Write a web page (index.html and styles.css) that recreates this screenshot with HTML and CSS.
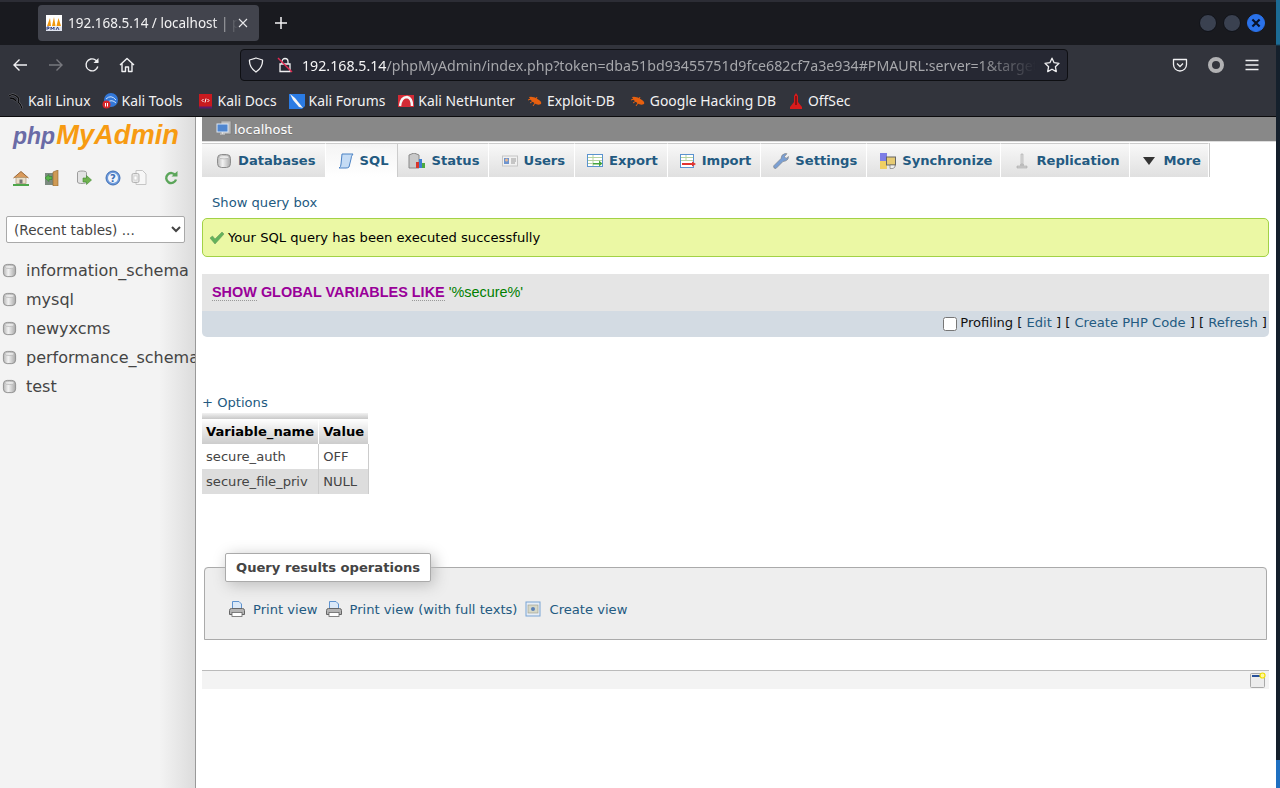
FILE: index.html
```html
<!DOCTYPE html>
<html lang="en">
<head>
<meta charset="utf-8">
<title>192.168.5.14 / localhost | phpMyAdmin</title>
<link rel="stylesheet" href="styles.css">
</head>
<body>
<svg class="defs" width="0" height="0" aria-hidden="true">
  <defs>
    <linearGradient id="cyl" x1="0" x2="1" y1="0" y2="0"><stop offset="0" stop-color="#b5b5b5"/><stop offset=".4" stop-color="#f2f2f2"/><stop offset="1" stop-color="#a8a8a8"/></linearGradient>
    <symbol id="db" viewBox="0 0 16 16">
      <rect x="1.500" y="1.500" width="13" height="13" rx="4" fill="url(#cyl)" stroke="#8d8d8d"/>
      <ellipse cx="8" cy="4.200" rx="5" ry="1.700" fill="#e9e9e9" stroke="#a5a5a5" stroke-width=".6"/>
    </symbol>
    <symbol id="printer" viewBox="0 0 16 16">
      <path d="M3.500 .5H10L12.500 3V9H3.500Z" fill="#dbe9f8" stroke="#5f93cf"/>
      <path d="M.5 9.500Q.5 7.500 2.500 7.500H13.500Q15.500 7.500 15.500 9.500V13.500H.5Z" fill="#b4b4b4" stroke="#666"/>
      <rect x="3" y="11.500" width="10" height="4" fill="#fff" stroke="#666" stroke-width=".8"/>
    </symbol>
  </defs>
</svg>
<div class="window">
  <header class="chrome">
    <div class="tabbar">
      <div class="tab">
        <svg class="ico16" viewBox="0 0 16 16"><rect width="16" height="16" fill="#fff"/><path d="M1 11L4 3L5 11ZM6 11L8 2L9.500 11ZM10.500 11L12.500 3L15 11Z" fill="#f0970f"/><rect x="0" y="11.500" width="16" height="4.500" fill="#dfe3ee"/><path d="M1 15V12H3V13.500H1.500M5 15V12L6.500 14L8 12V15M10 15L11.500 12L13 15" fill="none" stroke="#26367c" stroke-width=".9"/></svg>
        <span class="tab-title">192.168.5.14 / localhost | phpMyAdmin</span>
        <svg class="tab-x" viewBox="0 0 10 10"><path d="M1 1L9 9M9 1L1 9" stroke="#e8e8ea" stroke-width="1.100"/></svg>
      </div>
      <svg class="plus" viewBox="0 0 14 14"><path d="M7 1V13M1 7H13" stroke="#f4f4f5" stroke-width="1.500"/></svg>
      <div class="winctl">
        <span class="wc"></span><span class="wc"></span>
        <span class="wc wc-close"><svg viewBox="0 0 10 10"><path d="M2 2L8 8M8 2L2 8" stroke="#08122a" stroke-width="1.800"/></svg></span>
      </div>
    </div>
    <nav class="navbar">
      <svg class="nav-ico back" viewBox="0 0 16 16"><path d="M15 8H2M7.500 2.500L2 8L7.500 13.500" fill="none" stroke="#f0f0f2" stroke-width="1.400"/></svg>
      <svg class="nav-ico fwd" viewBox="0 0 16 16"><path d="M1 8H14M8.500 2.500L14 8L8.500 13.500" fill="none" stroke="#77787e" stroke-width="1.400"/></svg>
      <svg class="nav-ico reload" viewBox="0 0 16 16"><path d="M13.800 9.500A6 6 0 1 1 11.500 3L14 5" fill="none" stroke="#f0f0f2" stroke-width="1.400"/><path d="M14.500 1V6H9.500" fill="#f0f0f2"/></svg>
      <svg class="nav-ico home" viewBox="0 0 16 16"><path d="M1 8L8 1.500L15 8M3 6.500V14.500H6.500V10H9.500V14.500H13V6.500" fill="none" stroke="#f0f0f2" stroke-width="1.400" stroke-linejoin="round"/></svg>
      <div class="urlbar">
        <svg class="nav-ico shield" viewBox="0 0 16 16"><path d="M8 1L14.500 3Q15 10 8 15Q1 10 1.500 3Z" fill="none" stroke="#f0f0f2" stroke-width="1.300" stroke-linejoin="round"/></svg>
        <svg class="nav-ico lock" viewBox="0 0 16 16"><path d="M5 7V4.500A3 3 0 0 1 11 4.500V7M3 7H13V14.500H3Z" fill="none" stroke="#f0f0f2" stroke-width="1.300"/><path d="M1 1L15 15" stroke="#e22850" stroke-width="1.400"/></svg>
        <span class="url"><span class="url-host">192.168.5.14</span>/phpMyAdmin/index.php?token=dba51bd93455751d9fce682cf7a3e934#PMAURL:server=1&amp;target=&amp;db=</span>
        <svg class="nav-ico star" viewBox="0 0 16 16"><path d="M8 1.200L10.100 5.700L15 6.300L11.400 9.700L12.300 14.600L8 12.200L3.700 14.600L4.600 9.700L1 6.300L5.900 5.700Z" fill="none" stroke="#f0f0f2" stroke-width="1.300" stroke-linejoin="round"/></svg>
      </div>
      <svg class="nav-ico pocket" viewBox="0 0 16 16"><path d="M1.500 2.500H14.500V7.500A6.500 6.500 0 0 1 1.500 7.500Z" fill="none" stroke="#f0f0f2" stroke-width="1.300" stroke-linejoin="round"/><path d="M5 6.500L8 9.500L11 6.500" fill="none" stroke="#f0f0f2" stroke-width="1.300"/></svg>
      <svg class="nav-ico ring" viewBox="0 0 16 16"><circle cx="8" cy="8" r="6" fill="none" stroke="#b1b1b3" stroke-width="4"/></svg>
      <svg class="nav-ico menu" viewBox="0 0 16 16"><path d="M1.500 3.500H14.500M1.500 8H14.500M1.500 12.500H14.500" stroke="#f0f0f2" stroke-width="1.300"/></svg>
    </nav>
    <div class="bookmarks">
      <a class="bm"><svg class="ico16" viewBox="0 0 16 16"><path d="M1 3Q5 0 9 3.500Q12 6 10 9Q13 11 14 15.500M2 5Q6 5 8 8" fill="none" stroke="#77787e" stroke-width="2"/><path d="M1 3Q5 0 9 3.500Q12 6 10 9Q13 11 14 15.500M2 5Q6 5 8 8" fill="none" stroke="#08080a" stroke-width="1.300"/></svg><span>Kali Linux</span></a>
      <a class="bm bm-tools"><svg class="ico16" viewBox="0 0 16 16"><circle cx="9" cy="7" r="7" fill="#3277d8"/><path d="M4 6Q9 1 14 7M6 9Q10 6 14 10" fill="none" stroke="#cfe1f8"/><circle cx="4.500" cy="11.500" r="4" fill="#d9262b"/><path d="M3.500 10V13.500M5.500 10V13.500" stroke="#fff"/></svg><span>Kali Tools</span></a>
      <a class="bm bm-docs"><svg class="ico16" viewBox="0 0 16 16"><rect x="1" y="1" width="13" height="14" fill="#c81a1f"/><rect x="1" y="13.500" width="13" height="2" fill="#5b1a6b"/><path d="M5.500 6L4 7.500L5.500 9M9.500 6L11 7.500L9.500 9M8 5.500L7 9.500" fill="none" stroke="#fff"/></svg><span>Kali Docs</span></a>
      <a class="bm"><svg class="ico16" viewBox="0 0 16 16"><path d="M0 1H16V13L13 16H0Z" fill="#2a7be4"/><path d="M1 1L6 5L14 15L10 14L4 7Z" fill="#f4f4f4"/></svg><span>Kali Forums</span></a>
      <a class="bm bm-net"><svg class="ico16" viewBox="0 0 16 16"><rect y="2" width="16" height="12" fill="#d42a35"/><path d="M2 13Q3 4 9 4Q14 5 14 13" fill="none" stroke="#f5f5f5" stroke-width="2.500"/></svg><span>Kali NetHunter</span></a>
      <a class="bm"><svg class="ico16" viewBox="0 0 16 16"><path d="M2 4Q7 3 12 7Q15 9 14 11Q10 13 6 9Q3 7 2 4Z" fill="#e8600f"/><path d="M3 10L6 8M6 13L8 10M10 4L9 6M1 7L4 6" stroke="#e8600f"/></svg><span>Exploit-DB</span></a>
      <a class="bm bm-ghdb"><svg class="ico16" viewBox="0 0 16 16"><path d="M2 4Q7 3 12 7Q15 9 14 11Q10 13 6 9Q3 7 2 4Z" fill="#e8600f"/><path d="M3 10L6 8M6 13L8 10M10 4L9 6M1 7L4 6" stroke="#e8600f"/></svg><span>Google Hacking DB</span></a>
      <a class="bm"><svg class="ico16" viewBox="0 0 16 16"><path d="M8 0L10 3V9L14 14V16H2V14L6 9V3Z" fill="#d91c1c"/><path d="M8 3V12" stroke="#5c0a0a" stroke-width="1.200"/></svg><span>OffSec</span></a>
    </div>
  </header>

  <div class="app">
    <aside class="sidebar">
      <div class="logo"><span class="logo-php">php</span><span class="logo-my">MyAdmin</span></div>
      <div class="side-icons">
        <svg class="ico16 si-home" viewBox="0 0 16 16"><path d="M0.500 8L8 1.500L15.500 8" fill="#d99a5b" stroke="#9a6a3a"/><rect x="3" y="7.500" width="10" height="6" fill="#eadfc9" stroke="#a08a68" stroke-width=".6"/><rect x="6.500" y="9.500" width="3" height="4" fill="#777"/><path d="M0 15H16" stroke="#4ea64a" stroke-width="2"/></svg>
        <svg class="ico16 si-exit" viewBox="0 0 16 16"><rect x="1" y="3" width="9" height="12" fill="#7c8a80"/><path d="M9 2L14 0V16H9Z" fill="#cf9a55" stroke="#8f6530" stroke-width=".6"/><path d="M1 8L5 4.500V6.500H8V9.500H5V11.500Z" fill="#59b54a" stroke="#2c7a2c" stroke-width=".5"/></svg>
        <svg class="ico16 si-sql" viewBox="0 0 16 16"><path d="M1.500 2.500C1.500 .5 10.500 .5 10.500 2.500V12C10.500 14 1.500 14 1.500 12Z" fill="#e3e3e3" stroke="#9c9c9c"/><path d="M7 8H10.500V5.500L15.500 10L10.500 14.500V12H7Z" fill="#6fb24f" stroke="#3f8a30" stroke-width=".6"/></svg>
        <svg class="ico16 si-help" viewBox="0 0 16 16"><circle cx="8" cy="8" r="7" fill="#6f9bdc" stroke="#3e6fb5"/><circle cx="8" cy="8" r="5" fill="#f1f5fb"/><text class="help-q" x="8" y="11.500" text-anchor="middle">?</text></svg>
        <svg class="ico16 si-docs" viewBox="0 0 16 16"><path d="M5 .5H11.500L15 4V14.500H5Z" fill="#f7f7f7" stroke="#c6c6c6"/><rect x="1" y="3.500" width="7" height="9" rx="1.500" fill="#e7e7e7" stroke="#b3b3b3"/><rect x="3" y="6" width="3" height="4" fill="#fff" stroke="#bbb" stroke-width=".5"/></svg>
        <svg class="ico16 si-reload" viewBox="0 0 16 16"><path d="M12.500 5.500A5 5 0 1 0 13 9.500" fill="none" stroke="#5ba55a" stroke-width="2.400"/><path d="M8.500 6.500H14.500V1Z" fill="#5ba55a"/></svg>
      </div>
      <select class="recent"><option>(Recent tables) ...</option></select>
      <ul class="dblist">
        <li><svg class="ico15"><use href="#db"/></svg><span>information_schema</span></li>
        <li><svg class="ico15"><use href="#db"/></svg><span>mysql</span></li>
        <li><svg class="ico15"><use href="#db"/></svg><span>newyxcms</span></li>
        <li><svg class="ico15"><use href="#db"/></svg><span>performance_schema</span></li>
        <li><svg class="ico15"><use href="#db"/></svg><span>test</span></li>
      </ul>
    </aside>

    <main class="main">
      <div class="serverbar"><svg class="ico16" viewBox="0 0 16 16"><rect x="5" y="0" width="10" height="13" fill="#b9b9b9" stroke="#777" stroke-width=".6"/><rect x="1" y="3" width="11" height="8" fill="#4f86d0" stroke="#dbe6f4"/><path d="M4 13H9M6.500 11V13" stroke="#dfdfdf"/></svg><span>localhost</span></div>
      <div class="tabs">
        <a class="pt pt-db"><svg class="ico16"><use href="#db"/></svg>Databases</a>
        <a class="pt pt-active"><svg class="ico16" viewBox="0 0 16 16"><path d="M4 1H15Q13 3 13 6L11 14Q10 15 8 15H1Q3 14 3 11Z" fill="#c5dcf5" stroke="#4b82c4"/></svg>SQL</a>
        <a class="pt pt-status"><svg class="ico18" viewBox="0 0 18 16"><path d="M1 2L6 0L11 2V15H1Z" fill="#c9c9c9" stroke="#888"/><rect x="8" y="9" width="3" height="6" fill="#d9362b"/><rect x="11" y="6" width="3" height="9" fill="#3f7fd1"/><rect x="14" y="10" width="3" height="5" fill="#4caa3f"/></svg>Status</a>
        <a class="pt pt-wide"><svg class="ico16" viewBox="0 0 16 16"><rect x=".5" y="3" width="15" height="10" fill="#f1f1f1" stroke="#c5c5c5"/><rect x="2" y="5" width="5" height="6" fill="#6d94cf"/><circle cx="4.500" cy="7" r="1.500" fill="#eab98f"/><path d="M9 6H14M9 8H14M9 10H13" stroke="#999"/></svg>Users</a>
        <a class="pt pt-mid"><svg class="ico16" viewBox="0 0 16 16"><rect x=".5" y="1.500" width="15" height="12" fill="#fff" stroke="#5a93cf"/><path d="M1 4.500H15M1 7.500H15M1 10.500H15M6 2V13" stroke="#b5d3a0"/><path d="M6 10H12V7.500L15.500 10.500L12 13.500V11.500H6Z" fill="#46a53e"/></svg>Export</a>
        <a class="pt pt-mid"><svg class="ico16" viewBox="0 0 16 16"><rect x=".5" y="1.500" width="13" height="13" fill="#fff" stroke="#5a93cf"/><path d="M1 4.500H13M1 7.500H13M6 2V7" stroke="#b5d3a0"/><path d="M2 10H12V8.500L16 11L12 13.500V12H2Z" fill="#e2342f"/></svg>Import</a>
        <a class="pt pt-mid"><svg class="ico16" viewBox="0 0 16 16"><path d="M.5 13L8 5.500Q8 1.500 12 .5L14 .7L11.500 3.500L13 5.500L15.500 3.500Q15.500 8 10 8.500L3 15.500Q.5 16 .5 13Z" fill="#7a9fd3" stroke="#7f7f7f" stroke-width=".6"/></svg>Settings</a>
        <a class="pt pt-sync"><svg class="ico16" viewBox="0 0 16 16"><rect x="0" y="0" width="7" height="8" fill="#7e7ee6"/><rect x="0" y="8" width="7" height="8" fill="#efcf62"/><rect x="6.500" y="4" width="9" height="8" fill="#e6cb74" stroke="#666"/><path d="M10 12H15V14L13 15.500H10Z" fill="#eee" stroke="#666" stroke-width=".6"/></svg>Synchronize</a>
        <a class="pt pt-wide"><svg class="ico16" viewBox="0 0 16 16"><path d="M7 1H9V11H7Z" fill="#ddd" stroke="#aaa" stroke-width=".6"/><path d="M3 13H13V15H3Z" fill="#ccc" stroke="#aaa" stroke-width=".6"/><path d="M6 11H10V13H6Z" fill="#bbb"/></svg>Replication</a>
        <a class="pt pt-more"><svg class="more-arrow" viewBox="0 0 12 8"><path d="M0 0H12L6 8Z" fill="#333"/></svg>More</a>
      </div>
      <div class="body">
        <a class="link show-query">Show query box</a>
        <div class="success"><svg class="ico16" viewBox="0 0 16 16"><path d="M1 8L3.500 6L6 9L13 2L15 4L6 14Z" fill="#63b35a" stroke="#6a9a60" stroke-width=".6"/></svg>Your SQL query has been executed successfully</div>
        <div class="sql"><a class="kw kw-doc">SHOW</a> <span class="kw">GLOBAL VARIABLES</span> <a class="kw kw-doc">LIKE</a> <span class="str">'%secure%'</span></div>
        <div class="sql-tools">
          <label class="prof"><input type="checkbox" class="cb">Profiling</label>
          <span>[ <a class="link">Edit</a> ]</span>
          <span>[ <a class="link">Create PHP Code</a> ]</span>
          <span>[ <a class="link">Refresh</a> ]</span>
        </div>
        <a class="link options">+ Options</a>
        <table class="results">
          <thead>
            <tr class="strip"><th colspan="2"></th></tr>
            <tr class="hdr"><th>Variable_name</th><th>Value</th></tr>
          </thead>
          <tbody>
            <tr><td>secure_auth</td><td>OFF</td></tr>
            <tr class="even"><td>secure_file_priv</td><td>NULL</td></tr>
          </tbody>
        </table>
        <fieldset class="ops">
          <legend>Query results operations</legend>
          <div class="op-row">
            <a class="link op"><svg class="ico16"><use href="#printer"/></svg>Print view</a>
            <a class="link op"><svg class="ico16"><use href="#printer"/></svg>Print view (with full texts)</a>
            <a class="link op"><svg class="ico16" viewBox="0 0 16 16"><rect x="1" y="1" width="14" height="14" fill="#e7eef6" stroke="#79a3d3"/><rect x="3" y="4" width="10" height="8" fill="#d6d8c8" stroke="#9a9a8a" stroke-width=".6"/><circle cx="8" cy="8" r="2" fill="#5a80b5"/></svg>Create view</a>
          </div>
        </fieldset>
        <div class="console"><svg class="ico16" viewBox="0 0 16 16"><rect x=".5" y="1.500" width="14" height="14" rx="1" fill="#ececec" stroke="#a9a9a9"/><rect x="2" y="3" width="9" height="2" fill="#27509a"/><circle cx="12.500" cy="3.500" r="2.500" fill="#fff6a0" stroke="#f2e000" stroke-width="1.200"/></svg></div>
      </div>
    </main>
  </div>
</div>
<div class="desktop-edge"></div>
</body>
</html>
```

FILE: styles.css
```css
* { box-sizing: border-box; }
html, body { margin: 0; padding: 0; height: 788px; overflow: hidden; }
body { display: flex; width: 1280px; font-family: "DejaVu Sans", sans-serif; font-size: 13.12px; background: #fff; }
.defs { position: absolute; }
.window { width: 1276px; height: 788px; display: flex; flex-direction: column; }
.desktop-edge { width: 4px; height: 788px; background: linear-gradient(#1c6b94 0, #1c6b94 44px, #15202c 46px, #15202c 760px, #1f6fc0 760px); }
.ico16 { width: 16px; height: 16px; flex: none; display: block; }
.ico15 { width: 15px; height: 15px; flex: none; display: block; }
.ico18 { width: 18px; height: 16px; flex: none; display: block; }

/* browser chrome */
.chrome { flex: none; height: 117px; font-family: "Noto Sans", sans-serif; background: #32343c; border-bottom: 1px solid #0c0c0e; }
.tabbar { height: 45px; background: #191a1f; border-top: 2px solid #2c2d35; display: flex; align-items: flex-start; padding: 3px 0 0 38px; position: relative; }
.tab { width: 221px; height: 36px; background: #42444d; border-radius: 4px; display: flex; align-items: center; padding: 0 11px 0 8px; color: #f2f2f3; font-size: 13.5px; }
.tab-title { flex: 1; margin-left: 6px; white-space: nowrap; overflow: hidden; -webkit-mask-image: linear-gradient(90deg, #000 85%, transparent 100%); mask-image: linear-gradient(90deg, #000 85%, transparent 100%); }
.tab-x { width: 10px; height: 10px; flex: none; }
.plus { width: 14px; height: 14px; margin: 11px 0 0 15px; }
.winctl { margin-left: auto; margin-top: 9px; margin-right: 11px; display: flex; gap: 6px; }
.wc { width: 18px; height: 18px; border-radius: 50%; background: #3a4150; border: 1px solid #101218; display: flex; align-items: center; justify-content: center; }
.wc svg { width: 12px; height: 12px; }
.wc-close { background: #2a72ea; border-color: #2a72ea; }

.navbar { height: 42px; display: flex; align-items: flex-start; padding-top: 4px; position: relative; }
.nav-ico { width: 16px; height: 16px; flex: none; display: block; }
.navbar > .nav-ico { margin-top: 8px; }
.back { margin-left: 12px; }
.fwd { margin-left: 20px; }
.reload { margin-left: 20px; }
.home { margin-left: 19px; }
.urlbar { width: 828px; height: 32px; margin-left: 105px; background: #262833; border: 1px solid #0e0f13; border-radius: 4px; display: flex; align-items: center; padding: 0 7px 0 7px; }
.lock { margin-left: 13px; }
.url { flex: 1; margin: 0 8px 0 9px; font-size: 14.2px; white-space: nowrap; overflow: hidden; color: #a6a7ab; -webkit-mask-image: linear-gradient(90deg, #000 92%, transparent 100%); mask-image: linear-gradient(90deg, #000 92%, transparent 100%); }
.url-host { color: #f4f4f5; }
.pocket { margin-left: 104px; }
.ring { margin-left: 20px; }
.menu { margin-left: 20px; }

.bookmarks { height: 29px; display: flex; align-items: center; padding: 0 0 2px 8px; gap: 12px; font-size: 13.9px; color: #f2f2f3; }
.bm { display: flex; align-items: center; gap: 4px; white-space: nowrap; }
.bm-tools { margin-left: -1px; }
.bm-docs { margin-left: 3px; }
.bm-net { margin-left: 1px; }
.bm-ghdb { margin-left: 3px; }

/* layout */
.app { flex: 1; min-height: 0; display: flex; }
.sidebar { width: 196px; flex: none; overflow: hidden; border-right: 1px solid #999; background: linear-gradient(90deg, #f3f3f3 0, #f3f3f3 160px, #dcdcdc 100%); }
.main { flex: 1; min-width: 0; padding-left: 6px; background: #fff; }

/* sidebar */
.logo { height: 38px; padding-left: 13px; display: flex; align-items: baseline; font-family: "Liberation Sans", sans-serif; font-weight: 700; font-style: italic; line-height: 36px; }
.logo-php { color: #6a6ba6; font-size: 23px; margin-right: 1px; }
.logo-my { color: #f79b12; font-size: 27.300px; }
.side-icons { display: flex; height: 61px; padding: 15px 0 0 13px; }
.si-exit { margin-left: 15px; }
.si-sql { margin-left: 16px; }
.si-help { margin-left: 13px; }
.si-docs { margin-left: 10px; }
.si-reload { margin-left: 16px; }
.help-q { font: 700 10px "DejaVu Sans", sans-serif; fill: #3e6fb5; }
.recent { display: block; width: 179px; height: 27px; margin-left: 6px; font-family: "DejaVu Sans", sans-serif; font-size: 13.6px; color: #444; background: #fff; border: 1px solid #a9a9a9; border-radius: 2px; padding-left: 3px; }
.dblist { list-style: none; margin: 13px 0 0; padding: 0; }
.dblist li { height: 29px; display: flex; align-items: center; gap: 9px; padding-left: 2px; font-size: 16px; color: #444; white-space: nowrap; }

/* server bar + tabs */
.serverbar { height: 25px; background: #888; color: #fff; border-bottom: 1px solid #ddd; display: flex; align-items: center; padding-left: 14px; gap: 2px; font-size: 13px; text-shadow: 0 1px 0 #777; }
.tabs { margin-top: 1px; height: 34px; display: flex; width: 1008px; }
.pt { display: flex; align-items: center; gap: 6px; height: 34px; padding: 0 9px 0 11px; font-weight: 700; font-size: 13.12px; color: #235a81; white-space: nowrap; background: linear-gradient(#f8f8f8, #e0e0e0); border-right: 1px solid #fff; box-shadow: 1px 0 0 #ccc; border-top: 1px solid #ccc; }
.pt-db { padding-left: 14px; }
.pt-status { padding-left: 10px; padding-right: 8px; }
.pt-wide { padding-left: 13px; }
.pt-mid { padding-left: 12px; }
.pt-sync { padding-left: 13px; padding-right: 8px; }
.pt-active { background: linear-gradient(#f4f4f4, #fff); padding-left: 12px; padding-right: 8px; border-right-color: #ccc; box-shadow: none; }
.pt-more { padding-left: 13px; padding-right: 7px; gap: 9px; }
.more-arrow { width: 12px; height: 8px; flex: none; }

/* body */
.link { color: #235a81; }
.body { padding-right: 7px; }
.show-query { display: block; height: 41px; padding: 18px 0 0 10px; line-height: 16px; }
.success { height: 39px; background: #ebf8a4; border: 1px solid #a2d246; border-radius: 5px; display: flex; align-items: center; gap: 3px; padding-left: 6px; color: #000; }
.sql { margin-top: 17px; height: 37px; background: #e5e5e5; padding-left: 10px; font-family: "Liberation Sans", sans-serif; font-size: 14.43px; line-height: 36px; color: #008000; }
.kw { color: #990099; font-weight: 700; }
.kw-doc { border-bottom: 1px dotted #999; }
.str { color: #008000; }
.sql-tools { height: 26px; background: #d3dbe3; border-radius: 0 0 5px 5px; display: flex; justify-content: flex-end; align-items: center; gap: 4px; padding: 0 2px 4px 0; color: #111; }
.prof { display: flex; align-items: center; }
.cb { width: 14px; height: 14px; margin: 4px 3px 0 0; }
.options { display: block; margin-top: 58px; height: 18px; line-height: 16px; }
.results { border-collapse: collapse; color: #444; }
.strip th { height: 6px; padding: 0; background: linear-gradient(#f2f2f2, #c8c8c8); }
.hdr th { height: 25px; padding: 0 4px; text-align: left; color: #000; font-weight: 700; background: linear-gradient(#fff, #ccc); border-right: 1px solid #fff; }
.hdr th:last-child { border-right: 0; }
.results td { height: 25px; padding: 0 4px; border-right: 1px solid #ccc; }
.even td { background: #ddd; }
.ops { display: block; margin: 59px 2px 0 2px; min-width: 0; height: 87px; padding: 19px 0 0 24px; background: #eee; border: 1px solid #aaa; border-radius: 4px 4px 0 0; }
.ops legend { margin-left: -4px; height: 29px; padding: 0 10px; line-height: 27px; background: #fff; border: 1px solid #aaa; border-radius: 2px; font-weight: 700; color: #444; box-shadow: 3px 3px 15px #bbb; }
.op-row { display: flex; gap: 8px; }
.op { display: flex; align-items: center; gap: 8px; }
.console { margin-top: 30px; height: 19px; border-top: 1px solid #bbb; background: #f3f3f3; display: flex; justify-content: flex-end; align-items: center; padding-right: 3px; }
```
